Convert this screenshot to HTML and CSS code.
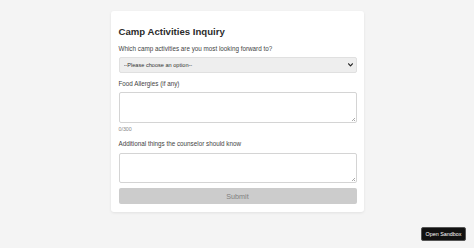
FILE: index.html
```html
<!DOCTYPE html>
<html lang="en">
<head>
<meta charset="utf-8">
<title>Camp Activities Inquiry</title>
<link rel="stylesheet" href="styles.css">
</head>
<body>
<main class="page">
  <form class="card">
    <h1 class="title">Camp Activities Inquiry</h1>
    <label class="label label-first" for="act">Which camp activities are you most looking forward to?</label>
    <div class="select-wrap">
      <select id="act" class="select">
        <option>--Please choose an option--</option>
      </select>
      <svg class="chevron" width="5" height="4" viewBox="0 0 5 4" aria-hidden="true">
        <path d="M0.6 0.8 L2.5 2.8 L4.4 0.8" fill="none" stroke="#222" stroke-width="1.2" stroke-linecap="round" stroke-linejoin="round"/>
      </svg>
    </div>
    <label class="label label-gap" for="food">Food Allergies (if any)</label>
    <div class="area-wrap">
      <textarea id="food" class="area area-food"></textarea>
    </div>
    <div class="counter">0/300</div>
    <label class="label label-gap2" for="extra">Additional things the counselor should know</label>
    <div class="area-wrap">
      <textarea id="extra" class="area area-extra"></textarea>
    </div>
    <button type="button" class="submit" disabled>Submit</button>
  </form>
</main>
<button type="button" class="sandbox">Open Sandbox</button>
</body>
</html>
```
FILE: styles.css
```css
html, body {
  margin: 0;
  padding: 0;
  background: #f4f4f4;
  font-family: "Liberation Sans", Arial, sans-serif;
  height: 100%;
}
.page {
  padding-top: 11px;
  display: flex;
  justify-content: center;
}
.card {
  width: 253px;
  box-sizing: border-box;
  background: #ffffff;
  border-radius: 3px;
  box-shadow: 0 1px 3px rgba(0, 0, 0, 0.08);
  padding: 15px 7px 8px 8px;
  display: flex;
  flex-direction: column;
}
.title {
  margin: 0;
  font-size: 9.6px;
  line-height: 12px;
  font-weight: bold;
  color: #2b2b2b;
}
.label {
  display: block;
  font-size: 6.3px;
  line-height: 8px;
  color: #444;
}
.label-first { margin-top: 7px; margin-bottom: 4px; }
.label-gap { margin-top: 7px; margin-bottom: 4px; }
.label-gap2 { margin-top: 7px; margin-bottom: 5px; }
.select-wrap {
  position: relative;
}
.select {
  display: block;
  -webkit-appearance: none;
  appearance: none;
  height: 16px;
  box-sizing: border-box;
  width: 100%;
  margin: 0;
  padding: 0 4px;
  font-family: "Liberation Sans", Arial, sans-serif;
  font-size: 5.6px;
  color: #333;
  background-color: #eeeeee;
  border: 1px solid #e0e0e0;
  border-radius: 2px;
}
.chevron {
  position: absolute;
  right: 4px;
  top: 6px;
  pointer-events: none;
}
.area-wrap {
  position: relative;
}
.area-wrap::after {
  content: "";
  position: absolute;
  right: 2px;
  bottom: 2px;
  width: 3px;
  height: 3px;
  background: linear-gradient(135deg, transparent 45%, #aaa 45%, #aaa 60%, transparent 60%, transparent 75%, #aaa 75%);
  pointer-events: none;
}
.area {
  display: block;
  width: 100%;
  box-sizing: border-box;
  margin: 0;
  border: 1px solid #d4d4d4;
  border-radius: 2px;
  background: #fff;
  resize: none;
  font-family: "Liberation Sans", Arial, sans-serif;
  font-size: 6px;
}
.area-food { height: 31px; }
.area-extra { height: 30px; }
.counter {
  margin-top: 3px;
  font-size: 5.3px;
  line-height: 7px;
  color: #888;
}
.submit {
  margin-top: 5px;
  height: 16px;
  width: 100%;
  border: none;
  border-radius: 2px;
  background: #cccccc;
  color: #808080;
  font-family: "Liberation Sans", Arial, sans-serif;
  font-size: 7.2px;
  padding: 0;
}
.sandbox {
  position: fixed;
  right: 8px;
  bottom: 7px;
  width: 45px;
  height: 14px;
  padding: 0;
  background: #111;
  color: #fff;
  border: 1px solid #555;
  border-radius: 2px;
  font-family: "Liberation Sans", Arial, sans-serif;
  font-size: 5.4px;
}
```
